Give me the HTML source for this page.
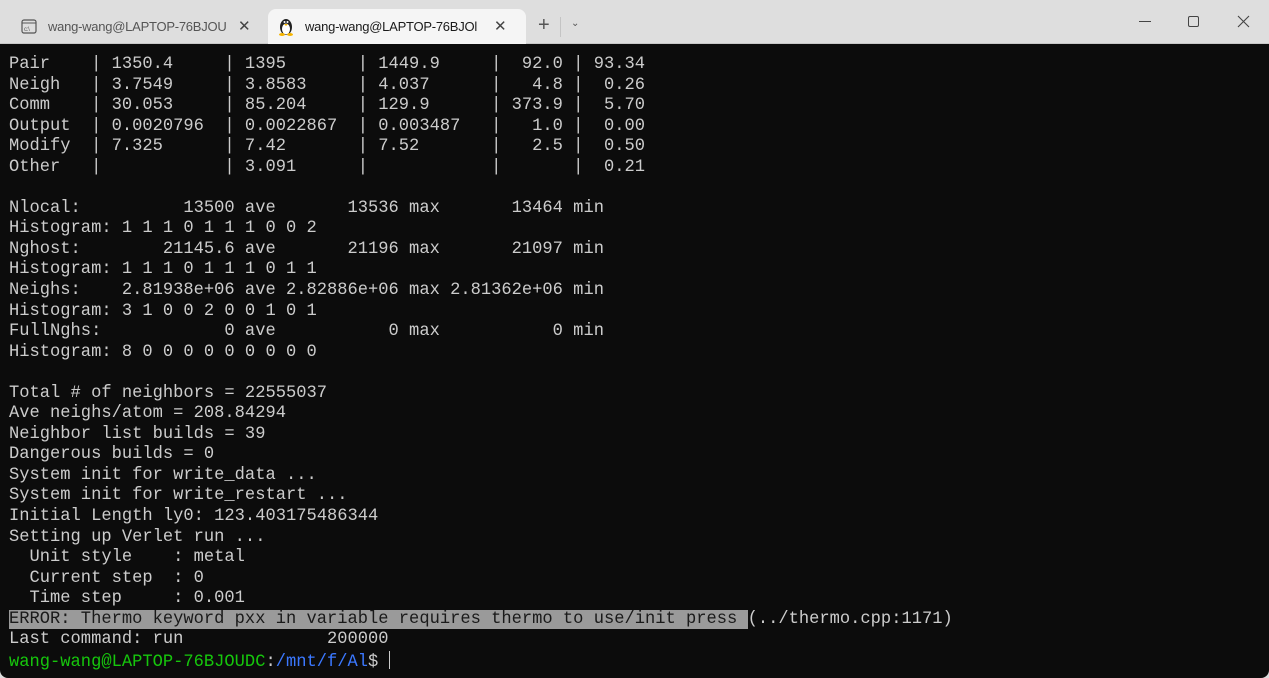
<!DOCTYPE html>
<html><head><meta charset="utf-8"><style>
*{margin:0;padding:0;box-sizing:border-box}
body{width:1269px;height:678px;overflow:hidden;background:#dcdcdc;font-family:"Liberation Sans",sans-serif;position:relative}
.bar{position:absolute;left:0;top:0;width:1269px;height:44px;background:#dedede;border-bottom:1px solid #c8c8c8}
.tab{position:absolute;top:9px;height:35px;font-size:13px;letter-spacing:-0.25px;color:#333;line-height:35px;white-space:nowrap}
.t1{left:10px;width:255px;color:#555}
.t2{left:268px;width:258px;background:#f5f5f5;border-radius:8px 8px 0 0;color:#1a1a1a}
.x{position:absolute;top:0;font-size:15px;color:#444}
.term{position:absolute;left:0;top:44px;width:1269px;height:634px;background:#0c0c0c;border-radius:0 0 8px 8px}
pre{position:absolute;left:9px;top:11px;font-family:"Liberation Mono",monospace;font-size:17.1px;line-height:20.54px;color:#cccccc}
.hl{background:#9a9a9a;color:#1a1a1a}
.g{color:#16c60c}.b{color:#3b78ff}
</style></head><body>
<div class="bar">
 <div class="tab t1"><svg style="position:absolute;left:11px;top:10px" width="16" height="15" viewBox="0 0 16 15"><rect x="1" y="1" width="14" height="13" rx="2" fill="none" stroke="#555" stroke-width="1.2"/><line x1="1" y1="4" x2="15" y2="4" stroke="#555"/><text x="3" y="12" font-size="6" fill="#555" font-family="Liberation Sans">c:\</text></svg><span style="position:absolute;left:38px">wang-wang@LAPTOP-76BJOU</span><span class="x" style="left:228px">✕</span></div>
 <div class="tab t2"><svg style="position:absolute;left:10px;top:8px" width="16" height="19" viewBox="0 0 16 19"><ellipse cx="8" cy="10" rx="6" ry="8" fill="#222"/><ellipse cx="8" cy="12" rx="4" ry="5.5" fill="#fff"/><circle cx="6.5" cy="5" r="1" fill="#fff"/><circle cx="9.5" cy="5" r="1" fill="#fff"/><path d="M6 7h4l-2 2z" fill="#f5b400"/><ellipse cx="4" cy="17.5" rx="3" ry="1.5" fill="#f5b400"/><ellipse cx="12" cy="17.5" rx="3" ry="1.5" fill="#f5b400"/></svg><span style="position:absolute;left:37px">wang-wang@LAPTOP-76BJOl</span><span class="x" style="left:226px">✕</span></div>
 <div style="position:absolute;left:538px;top:14px;font-size:20px;color:#555;line-height:22px">+</div>
 <div style="position:absolute;left:560px;top:17px;width:1px;height:20px;background:#c4c4c4"></div>
 <div style="position:absolute;left:571px;top:18px;font-size:10px;color:#555">&#8964;</div>
 <div style="position:absolute;left:1139px;top:21px;width:12px;height:1px;background:#444"></div>
 <div style="position:absolute;left:1188px;top:16px;width:11px;height:11px;border:1px solid #444;border-radius:2px"></div>
 <svg style="position:absolute;left:1237px;top:15px" width="13" height="13"><path d="M1 1L12 12M12 1L1 12" stroke="#444" stroke-width="1.1"/></svg>
</div>
<div class="term"><pre>Pair    | 1350.4     | 1395       | 1449.9     |  92.0 | 93.34
Neigh   | 3.7549     | 3.8583     | 4.037      |   4.8 |  0.26
Comm    | 30.053     | 85.204     | 129.9      | 373.9 |  5.70
Output  | 0.0020796  | 0.0022867  | 0.003487   |   1.0 |  0.00
Modify  | 7.325      | 7.42       | 7.52       |   2.5 |  0.50
Other   |            | 3.091      |            |       |  0.21

Nlocal:          13500 ave       13536 max       13464 min
Histogram: 1 1 1 0 1 1 1 0 0 2
Nghost:        21145.6 ave       21196 max       21097 min
Histogram: 1 1 1 0 1 1 1 0 1 1
Neighs:    2.81938e+06 ave 2.82886e+06 max 2.81362e+06 min
Histogram: 3 1 0 0 2 0 0 1 0 1
FullNghs:            0 ave           0 max           0 min
Histogram: 8 0 0 0 0 0 0 0 0 0

Total # of neighbors = 22555037
Ave neighs/atom = 208.84294
Neighbor list builds = 39
Dangerous builds = 0
System init for write_data ...
System init for write_restart ...
Initial Length ly0: 123.403175486344
Setting up Verlet run ...
  Unit style    : metal
  Current step  : 0
  Time step     : 0.001
<span class="hl">ERROR: Thermo keyword pxx in variable requires thermo to use/init press </span>(../thermo.cpp:1171)
Last command: run              200000
<span class="g">wang-wang@LAPTOP-76BJOUDC</span>:<span class="b">/mnt/f/Al</span>$ <span style="display:inline-block;width:1px;height:18px;background:#ccc;vertical-align:-3px"></span></pre></div>
</body></html>
